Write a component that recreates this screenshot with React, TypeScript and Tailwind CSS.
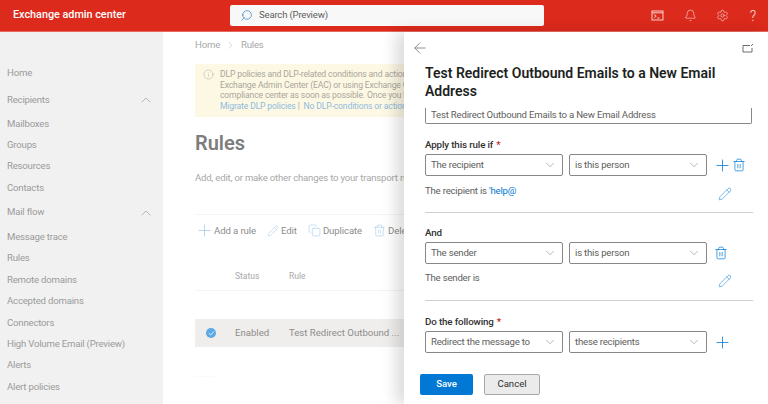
import { Plus, Trash2, Pencil, Copy, ChevronUp, ChevronDown, ChevronRight, ArrowLeft, Search, Bell, Settings, Info, Check } from "lucide-react";

const font = { fontFamily: 'Roboto, "Noto Sans", sans-serif' };

function NavItem({ label, head, chevron }: { label: string; head?: boolean; chevron?: boolean }) {
  return (
    <div className={`flex items-center justify-between pl-[7px] pr-[9px] text-[9.6px] tracking-[-0.2px] text-[#9b9b9b] ${head ? "h-[24px]" : "h-[21.4px]"}`}>
      <span>{label}</span>
      {chevron && <ChevronUp size={16} strokeWidth={0.9} className="text-[#8f8f8f]" />}
    </div>
  );
}

function Select({ value }: { value: string }) {
  return (
    <div className="flex h-[22px] w-[138px] items-center justify-between rounded-[2px] border border-[#8a8886] pl-[5px] pr-[5px] text-[9.6px] tracking-[-0.2px] whitespace-nowrap text-[#605e5c]">
      <span>{value}</span>
      <ChevronDown size={14} strokeWidth={0.9} className="text-[#777]" />
    </div>
  );
}

function Label({ text, req }: { text: string; req?: boolean }) {
  return (
    <div className="flex h-[16px] items-center text-[9.8px] tracking-[-0.15px] font-medium text-[#323130]">
      {text}
      {req && <span className="ml-[3px] text-[#c4262e]">*</span>}
    </div>
  );
}

function Note({ children, className }: { children: React.ReactNode; className: string }) {
  return (
    <div className={`flex items-start justify-between pr-[21px] text-[9.6px] tracking-[-0.2px] whitespace-nowrap text-[#605e5c] ${className}`}>
      <span>{children}</span>
      <Pencil size={14} strokeWidth={0.9} className="mt-[3px] text-[#0078d4]" />
    </div>
  );
}

export default function App() {
  return (
    <div style={font} className="relative flex h-[404px] w-[768px] flex-col overflow-hidden bg-white">
      <header className="flex h-[32px] shrink-0 items-center border-b border-[#e86a5f] bg-[#dc2a1c]">
        <div className="w-[230px] pl-[13px] text-[10.8px] font-medium text-white">Exchange admin center</div>
        <div className="flex h-[21px] w-[314px] items-center gap-[6px] rounded-[2px] bg-[#f8f8f8] pl-[10px] text-[9.6px] tracking-[-0.2px] text-[#605e5c]">
          <Search size={13} strokeWidth={1.1} className="-scale-x-100 text-[#0f6cbd]" />
          <span>Search (Preview)</span>
        </div>
        <div className="ml-auto flex items-center pr-[12px] text-[#f9e0de]">
          <svg width="13" height="11" viewBox="0 0 13 11" fill="none" stroke="currentColor" strokeWidth="0.9" className="mr-[20px]">
            <rect x="1" y="1" width="11" height="9" />
            <path d="M1 2.8h11M3.2 4.5l2 1.6-2 1.6M6.3 8h2.2" />
          </svg>
          <Bell size={13} strokeWidth={1.1} className="mr-[19px]" />
          <Settings size={13} strokeWidth={1.1} className="mr-[21px]" />
          <span className="text-[14px] leading-none font-light">?</span>
        </div>
      </header>
      <div className="flex min-h-0 flex-1">
        <aside className="w-[163px] shrink-0 bg-[#f1f1f1] pt-[29px]">
          <NavItem label="Home" head />
          <div className="h-[3px]" />
          <NavItem label="Recipients" head chevron />
          <div className="h-[1px]" />
          <NavItem label="Mailboxes" />
          <NavItem label="Groups" />
          <NavItem label="Resources" />
          <NavItem label="Contacts" />
          <div className="h-[2px]" />
          <NavItem label="Mail flow" head chevron />
          <div className="h-[2px]" />
          <NavItem label="Message trace" />
          <NavItem label="Rules" />
          <NavItem label="Remote domains" />
          <NavItem label="Accepted domains" />
          <NavItem label="Connectors" />
          <NavItem label="High Volume Email (Preview)" />
          <NavItem label="Alerts" />
          <NavItem label="Alert policies" />
        </aside>
        <main className="min-w-0 flex-1 overflow-hidden pl-[32px]">
          <div className="flex h-[26px] items-center gap-[5px] text-[9.6px] tracking-[-0.2px] text-[#a8a8a8]">
            <span>Home</span>
            <ChevronRight size={11} strokeWidth={1} />
            <span>Rules</span>
          </div>
          <div className="mt-[6px] flex h-[53px] w-[400px] gap-[6px] bg-[#fdf8e4] pl-[8px] pt-[3px] text-[8.6px] tracking-[-0.15px] leading-[10.7px] whitespace-nowrap text-[#a9a69c]">
            <Info size={11} strokeWidth={1} className="mt-[2px] shrink-0" />
            <div className="pt-[2px]">
              <div>DLP policies and DLP-related conditions and actions</div>
              <div>Exchange Admin Center (EAC) or using Exchange Online</div>
              <div>compliance center as soon as possible. Once you have</div>
              <div className="text-[#8fbbdd]">Migrate DLP policies <span className="text-[#a9a69c]">|</span>&nbsp;&nbsp;No DLP-conditions or actions</div>
            </div>
          </div>
          <h1 className="mt-[13px] text-[20px] leading-[27px] font-semibold text-[#7d7d7d]">Rules</h1>
          <p className="mt-[14px] text-[9.6px] tracking-[-0.2px] whitespace-nowrap text-[#a8a8a8]">Add, edit, or make other changes to your transport rules</p>
          <div className="mt-[29px] border-t border-[#f3f3f3]" />
          <div className="mt-[7px] flex h-[17px] items-center text-[9.6px] tracking-[-0.1px] whitespace-nowrap text-[#8c8c8c]">
            <Plus size={19} strokeWidth={0.8} className="mr-[0px] text-[#8fbfe6]" />
            <span>Add a rule</span>
            <Pencil size={12} strokeWidth={0.9} className="ml-[11px] mr-[2px] text-[#8fbfe6]" />
            <span>Edit</span>
            <Copy size={13} strokeWidth={0.9} className="ml-[11px] mr-[2px] text-[#8fbfe6]" />
            <span>Duplicate</span>
            <Trash2 size={13} strokeWidth={0.9} className="ml-[11px] mr-[2px] text-[#8fbfe6]" />
            <span>Delete</span>
          </div>
          <div className="mt-[27px] flex h-[25px] items-start border-b border-[#f3f3f3] pt-[4px] text-[8.5px] text-[#a8a8a8]">
            <span className="ml-[40px] w-[54px]">Status</span>
            <span>Rule</span>
          </div>
          <div className="mt-[28px] flex h-[28px] w-[400px] items-center bg-[#f0eeed] text-[9.6px] whitespace-nowrap text-[#8c8c8c]">
            <span className="ml-[11px] mr-[19px] flex size-[10px] items-center justify-center rounded-full bg-[#5ba9e6]">
              <Check size={7} strokeWidth={3} className="text-white" />
            </span>
            <span className="w-[54px]">Enabled</span>
            <span>Test Redirect Outbound ...</span>
          </div>
          <div className="mt-[29px] w-[20px] border-t border-[#fafafa]" />
        </main>
      </div>

      <section className="absolute top-[32px] right-0 bottom-0 flex w-[364px] flex-col bg-white shadow-[-8px_0_14px_rgba(0,0,0,0.14)]">
        <div className="flex h-[30px] shrink-0 items-center justify-between pt-[2px] pl-[7px] pr-[14px] text-[#605e5c]">
          <ArrowLeft size={18} strokeWidth={0.9} />
          <svg width="12" height="10" viewBox="0 0 12 10" fill="none" stroke="currentColor" strokeWidth="0.9">
            <path d="M8 2.5H1v6.5h9V5M9 3l2-2" />
          </svg>
        </div>
        <h2 className="ml-[21px] h-[46px] w-[320px] shrink-0 pt-[2px] text-[14px] leading-[18px] font-semibold text-[#201f1e]">
          Test Redirect Outbound Emails to a New Email Address
        </h2>
        <div className="ml-[21px] mr-[16px] flex h-[16px] shrink-0 items-end">
          <div className="flex h-[16px] w-full items-center rounded-b-[2px] border-x border-b border-[#8a8886] pl-[5px] pb-[1px] text-[9.6px] tracking-[-0.2px] whitespace-nowrap text-[#605e5c]">
            Test Redirect Outbound Emails to a New Email Address
          </div>
        </div>
        <div className="ml-[21px] mr-[15px] pt-[13px]">
          <Label text="Apply this rule if" req />
          <div className="mt-[1px] flex items-center gap-[6px]">
            <Select value="The recipient" />
            <Select value="is this person" />
            <Plus size={19} strokeWidth={1} className="text-[#0078d4]" />
            <Trash2 size={14} strokeWidth={1.2} className="-ml-[6px] text-[#0078d4]" />
          </div>
          <Note className="h-[36px] pt-[8px]">The recipient is <span className="text-[#0078d4]">'help@</span></Note>
          <div className="border-t border-[#d0d0d0]" />
          <div className="mt-[12px]"><Label text="And" /></div>
          <div className="mt-[1px] flex items-center gap-[6px]">
            <Select value="The sender" />
            <Select value="is this person" />
            <Trash2 size={14} strokeWidth={1.2} className="ml-[1px] text-[#0078d4]" />
          </div>
          <Note className="h-[36px] pt-[7px]">The sender is</Note>
          <div className="border-t border-[#d0d0d0]" />
          <div className="mt-[13px]"><Label text="Do the following" req /></div>
          <div className="mt-[1px] flex items-center gap-[6px]">
            <Select value="Redirect the message to" />
            <Select value="these recipients" />
            <Plus size={19} strokeWidth={1} className="text-[#0078d4]" />
          </div>
        </div>
        <div className="mt-[21px] ml-[16px] flex gap-[11px] text-[9.6px] font-medium">
          <button className="h-[21px] w-[53px] rounded-[2px] bg-[#0078d4] text-white">Save</button>
          <button className="h-[21px] w-[56px] rounded-[2px] border border-[#a8a8a8] bg-[#ebebeb] font-normal text-[#323130]">Cancel</button>
        </div>
      </section>
    </div>
  );
}
